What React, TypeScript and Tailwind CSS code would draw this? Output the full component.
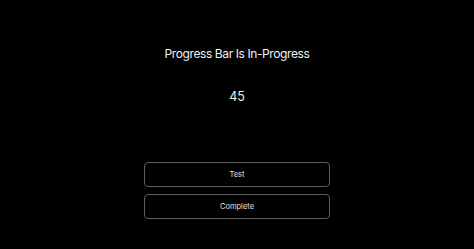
export default function App() {
  return (
    <div className="h-[249px] w-[474px] bg-black flex flex-col items-center font-['Inter',sans-serif] text-white">
      <h1 className="mt-[46px] text-[12px] leading-[16px] font-normal tracking-[-0.4px] text-[#f2f2f2]">
        Progress Bar Is In-Progress
      </h1>
      <p className="mt-[27px] text-[12.5px] leading-[16px] font-normal text-[#f2f2f2]">45</p>
      <div className="mt-[57px] flex flex-col gap-[7px] w-[186px]">
        <button className="h-[25px] rounded-[4px] border border-[#5c5c5c] text-[7.5px] text-[#e0e0e0]">Test</button>
        <button className="h-[25px] rounded-[4px] border border-[#5c5c5c] text-[7.5px] text-[#e0e0e0]">Complete</button>
      </div>
    </div>
  );
}
